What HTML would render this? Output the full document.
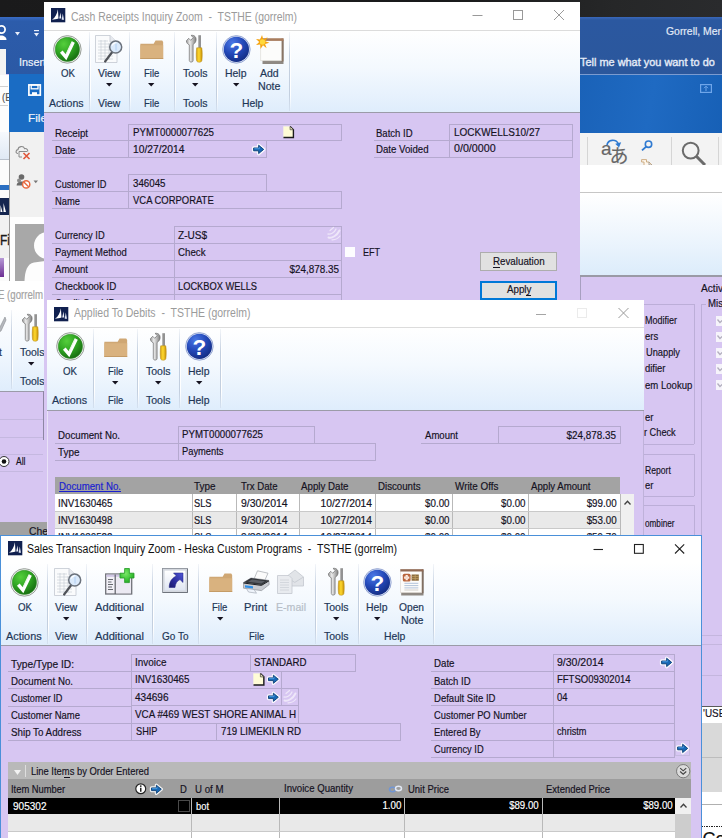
<!DOCTYPE html>
<html lang="en"><head><meta charset="utf-8"><title>Dynamics GP windows</title>
<style>
html,body{margin:0;padding:0;background:#fff;}
#root{position:relative;width:722px;height:838px;overflow:hidden;background:#d7c6f2;font-family:"Liberation Sans",sans-serif;}
.b{position:absolute;box-sizing:border-box;}
.t{position:absolute;white-space:pre;line-height:1;color:#15121f;-webkit-text-stroke:0.18px;transform-origin:0 0;font-family:"Liberation Sans",sans-serif;}
.w{position:absolute;overflow:hidden;}
svg{position:absolute;overflow:visible;}
</style></head>
<body><div id="root">
<div class="b" style="left:0px;top:0px;width:722px;height:17.4px;background:linear-gradient(90deg,#1a1a1b,#1d1d1e 40%,#18191a 60%,#262728 85%,#2a2b2d);"></div>
<div class="b" style="left:0px;top:17px;width:44px;height:57px;background:linear-gradient(#3a6cc6 0,#2c5cab 4px,#2b59a5 100%);"></div>
<div class="b" style="left:0px;top:49px;width:6px;height:26px;background:#f3f3f3;"></div>
<svg style="left:0px;top:25px" width="8" height="16" viewBox="0 0 8 16"><circle cx="1.5" cy="4.5" r="3.6" fill="none" stroke="#fff" stroke-width="1.8"/><path d="M-4 15 C-4 9 6.500 9 6.500 15 Z" fill="#fff"/></svg>
<svg style="left:14.5px;top:31.5px" width="5" height="3.4" viewBox="0 0 5 3.4"><path d="M0 0H5L2.500 3.4Z" fill="#e8eefa"/></svg>
<svg style="left:33.5px;top:29.5px" width="5" height="6.5" viewBox="0 0 5 6.5"><path d="M0 0.6H5" stroke="#e8eefa" stroke-width="1.2"/><path d="M0 3H5L2.500 6.400Z" fill="#e8eefa"/></svg>
<span class="t" style="top:56.89px;font-size:11px;left:18.60px;transform:scaleX(0.9814);color:#f0f4fb;">Insert</span>
<div class="b" style="left:0px;top:75px;width:8.5px;height:57px;background:#fdfdfd;"></div>
<div class="b" style="left:0px;top:86px;width:8px;height:1px;background:#d0d0d0;"></div>
<div class="b" style="left:0px;top:105px;width:8px;height:1px;background:#d0d0d0;"></div>
<span class="t" style="top:92.19px;font-size:11px;left:2.30px;transform:scaleX(0.8600);color:#555;">(E</span>
<div class="b" style="left:8.5px;top:74px;width:36px;height:57.5px;background:#1a6cc4;"></div>
<svg style="left:28.4px;top:84.2px" width="13.2" height="12" viewBox="0 0 13.2 12"><rect x="0.9" y="0.9" width="11.4" height="10.2" fill="none" stroke="#fff" stroke-width="1.7"/><rect x="3.200" y="1" width="6.800" height="3.800" fill="none" stroke="#fff" stroke-width="1.3"/><rect x="4" y="8.200" width="5" height="3" fill="#fff"/></svg>
<span class="t" style="top:113.29px;font-size:11px;left:28.40px;transform:scaleX(1.0719);color:#f0f4fb;">File</span>
<div class="b" style="left:0px;top:131.5px;width:9px;height:150px;background:#fbfbfb;"></div>
<div class="b" style="left:0px;top:131.5px;width:8.5px;height:28px;background:linear-gradient(#f6f9fd,#dfe8f4);"></div>
<div class="b" style="left:0px;top:159px;width:8.5px;height:1px;background:#b9c1cc;"></div>
<div class="b" style="left:0px;top:185px;width:8.5px;height:4.5px;background:#2b6fc2;"></div>
<div class="b" style="left:0px;top:198px;width:8.5px;height:17px;background:#14254f;"></div>
<svg style="left:0px;top:201px" width="8" height="12" viewBox="0 0 8 12"><path d="M0.5 11V4L2.500 11Z M3.500 11V2L6 11Z" fill="#fff"/></svg>
<div class="b" style="left:0px;top:215px;width:8.5px;height:43px;background:#f1f1f1;"></div>
<span class="t" style="top:232.30px;font-size:15px;left:0.00px;transform:scaleX(0.8000);color:#1a1a1a;-webkit-text-stroke:0.4px;">Fi</span>
<div class="b" style="left:0px;top:258px;width:4px;height:19px;background:linear-gradient(#b79ad6,#6d2f93);"></div>
<div class="b" style="left:8.5px;top:131.5px;width:36px;height:85px;background:#f1f1f1;"></div>
<div class="b" style="left:8.5px;top:216.5px;width:36px;height:65px;background:#fefefe;"></div>
<div class="b" style="left:8.5px;top:131.5px;width:1px;height:149.5px;background:#9c9c9c;"></div>
<svg style="left:14.5px;top:145px" width="16" height="15" viewBox="0 0 16 15"><path d="M3 8.500 C0.4 8.500 0.4 4.800 3 4.600 C3.200 1.200 8.400 0.4 9.600 3.600 C11.800 3.200 13.200 5 12.600 6.600" fill="none" stroke="#8a8a8a" stroke-width="1.1"/><path d="M4 6.500H12M4 6.500V12H7" fill="none" stroke="#8a8a8a" stroke-width="1"/><path d="M8.500 8L14.500 14M14.500 8L8.500 14" stroke="#e0563a" stroke-width="1.6"/></svg>
<svg style="left:15.5px;top:173.5px" width="23" height="15" viewBox="0 0 23 15"><circle cx="5.500" cy="3" r="2.800" fill="#6a6a6a"/><path d="M0.6 11.500 C0.6 6 10.400 6 10.400 11.500 Z" fill="#6a6a6a"/><circle cx="3" cy="6.500" r="2" fill="#8b8b8b"/><circle cx="10.200" cy="10.400" r="3.600" fill="#fff" stroke="#e8693f" stroke-width="1.5"/><path d="M7.800 8L12.600 12.800" stroke="#e8693f" stroke-width="1.4"/><path d="M17.500 6.500H22L19.750 9.200Z" fill="#777"/></svg>
<div class="b" style="left:15px;top:224px;width:30px;height:57px;background:#a8a8a8;"></div>
<div class="b" style="left:34px;top:232px;width:27px;height:27px;background:#fdfdfd;border-radius:50%;"></div>
<svg style="left:15px;top:224px" width="30" height="57" viewBox="0 0 30 57"><path d="M9.500 57 C10 47 12 40 19 38.500 L30 37 V57 Z" fill="#fdfdfd"/></svg>
<div class="b" style="left:0px;top:281px;width:44px;height:27.5px;background:#ffffff;"></div>
<span class="t" style="top:288.54px;font-size:12px;left:-2.00px;transform:scaleX(0.8034);color:#a3a3a3;">E (gorrelm</span>
<div class="b" style="left:0px;top:308px;width:44px;height:83px;background:linear-gradient(#ffffff 0%,#f4f9fe 45%,#dfedfc 100%);"></div>
<div class="b" style="left:10.5px;top:310px;width:1px;height:79px;background:linear-gradient(rgba(197,208,224,.2),#c3cfdf 30%,#c3cfdf 80%,rgba(197,208,224,.4));"></div>
<div class="b" style="left:11.5px;top:310px;width:1px;height:79px;background:linear-gradient(rgba(255,255,255,0),#ffffff 30%,#ffffff 80%,rgba(255,255,255,0));"></div>
<svg style="left:-3px;top:317px" width="9" height="17" viewBox="0 0 9 17"><path d="M8 0L2 12L0 16L4 14L9 3Z" fill="#b5b8bd" stroke="#8a8d92" stroke-width="0.6"/></svg>
<span class="t" style="top:346.91px;font-size:10.5px;left:-1.00px;transform:scaleX(1.0000);color:#1e3656;">t</span>
<svg style="left:22.2px;top:313.5px" width="16.2" height="27.5" viewBox="0 0 16.2 27.5"><defs><linearGradient id="g1" x1="0" y1="0" x2="1" y2="0"><stop offset="0" stop-color="#9a9a9a"/><stop offset="0.35" stop-color="#ececec"/><stop offset="1" stop-color="#7e7e7e"/></linearGradient><linearGradient id="g2" x1="0" y1="0" x2="1" y2="0"><stop offset="0" stop-color="#d39f0e"/><stop offset="0.45" stop-color="#ffd92e"/><stop offset="1" stop-color="#c48e0a"/></linearGradient><linearGradient id="g3" x1="0" y1="0" x2="1" y2="0"><stop offset="0" stop-color="#b9b9b9"/><stop offset="1" stop-color="#6f6f6f"/></linearGradient></defs><path d="M0.4 5.800 L2.700 3.300 L4.700 5.300 L7.300 2.500 L5 0.4 C8.500 -0.4 10.900 2.600 9.900 6 C9.400 7.800 8 8.800 7.100 9.500 L7.100 25.500 C7.100 27.600 3.300 27.600 3.300 25.500 L3.300 9.800 C1.500 9.200 0.4 7.600 0.4 5.800 Z" fill="url(#g1)" stroke="#6d6d6d" stroke-width="0.7" stroke-linejoin="round"/><rect x="12.100" y="0.2" width="2.700" height="13" fill="url(#g3)"/><path d="M10.700 12.800 H15.800 C16.400 17 16.400 22 15.900 25.600 C15.700 27.800 10.800 27.800 10.600 25.600 C10.100 22 10.100 17 10.700 12.800 Z" fill="url(#g2)" stroke="#b5860b" stroke-width="0.5"/></svg>
<span class="t" style="top:346.91px;font-size:10.5px;left:19.50px;transform:scaleX(0.9954);color:#1e3656;">Tools</span>
<svg style="left:27.8px;top:362.4px" width="6.4" height="3.4" viewBox="0 0 6.4 3.4"><path d="M0 0 H6.4 L3.2 3.4 Z" fill="#15121f"/></svg>
<span class="t" style="top:376.31px;font-size:10.5px;left:19.50px;transform:scaleX(0.9954);color:#1e3656;">Tools</span>
<div class="b" style="left:0px;top:391px;width:44px;height:1px;background:#9b9ba8;"></div>
<div class="b" style="left:0px;top:392px;width:44px;height:146px;background:#d7c6f2;"></div>
<div class="b" style="left:0px;top:419px;width:43px;height:1px;background:#c5b8e0;"></div>
<div class="b" style="left:0px;top:437px;width:43px;height:1px;background:#c5b8e0;"></div>
<div class="b" style="left:0px;top:453.5px;width:43px;height:1px;background:#c5b8e0;"></div>
<div class="b" style="left:0px;top:471px;width:43px;height:1px;background:#c5b8e0;"></div>
<svg style="left:-2px;top:455.5px" width="12" height="12" viewBox="0 0 12 12"><circle cx="6" cy="5.500" r="5" fill="#fff" stroke="#333" stroke-width="1"/><circle cx="6" cy="5.500" r="2.300" fill="#111"/></svg>
<span class="t" style="top:456.19px;font-size:11px;left:15.70px;transform:scaleX(0.7771);">All</span>
<div class="b" style="left:0px;top:522px;width:47px;height:14px;background:#a2a2a2;"></div>
<span class="t" style="top:526.19px;font-size:11px;left:28.70px;transform:scaleX(0.9416);">Che</span>
<div class="b" style="left:44px;top:300px;width:3px;height:140px;background:#d7c6f2;"></div>
<div class="b" style="left:43px;top:391px;width:1px;height:49px;background:#8d86a3;"></div>
<div class="b" style="left:580px;top:17px;width:142px;height:57px;background:linear-gradient(#3a68bb 0,#2b58a0 3px,#2b579c 100%);"></div>
<div class="b" style="left:580px;top:74px;width:142px;height:1px;background:#7b9bd0;"></div>
<div class="b" style="left:580px;top:75px;width:142px;height:58px;background:linear-gradient(100deg,#1a62b8 0%,#1f6ac2 50%,#1760b6 100%);"></div>
<span class="t" style="top:26.27px;font-size:11.5px;left:665.80px;transform:scaleX(0.9061);color:#e4ebf7;">Gorrell, Mer</span>
<span class="t" style="top:56.77px;font-size:11.5px;left:580.40px;transform:scaleX(0.9499);color:#e4ebf7;-webkit-text-stroke:0.4px;">Tell me what you want to do</span>
<svg style="left:699.5px;top:83.5px" width="12" height="9" viewBox="0 0 12 9"><rect x="0.6" y="0.6" width="10.8" height="7.800" fill="none" stroke="#6fa6ea" stroke-width="1.2"/><path d="M6 7V2.500M4 4.200L6 2.200L8 4.200" stroke="#6fa6ea" stroke-width="1" fill="none"/></svg>
<div class="b" style="left:580px;top:133px;width:142px;height:32px;background:#f3f3f3;"></div>
<div class="b" style="left:587px;top:137px;width:1px;height:28px;background:#d5d5d5;"></div>
<div class="b" style="left:671px;top:137px;width:1px;height:28px;background:#d5d5d5;"></div>
<div class="b" style="left:717.5px;top:137px;width:1px;height:28px;background:#d5d5d5;"></div>
<div class="b" style="left:596px;top:136px;width:40px;height:29px;overflow:hidden;"><span class="t" style="left:5px;top:3px;font-size:19px;color:#666;transform:none;">a</span><span class="t" style="left:13.5px;top:11px;font-size:19px;color:#666;transform:none;font-family:'Liberation Sans','Noto Sans CJK JP',sans-serif;">あ</span><svg style="left:10px;top:2px" width="16" height="11" viewBox="0 0 16 11"><path d="M1 7 C2 1.200 10 0.6 12.500 6" fill="none" stroke="#2f7ad1" stroke-width="1.7"/><path d="M9.200 5.800L13 9.500L15.200 4.200Z" fill="#2f7ad1"/></svg></div>
<svg style="left:641px;top:140px" width="12" height="11" viewBox="0 0 12 11"><circle cx="7.500" cy="4.200" r="3.200" fill="none" stroke="#2f7ad1" stroke-width="1.6"/><path d="M5.200 6.600L1 10.400" stroke="#2f7ad1" stroke-width="1.900"/></svg>
<div class="b" style="left:641px;top:159px;width:13px;height:6px;overflow:hidden;"><svg style="left:0;top:0" width="13" height="12" viewBox="0 0 13 12"><path d="M0.6 0.6H5.500V3H8L11 6V12H3V3H0.6Z" fill="#fdf6ec" stroke="#c9a77a" stroke-width="0.9"/><path d="M8 3V6H11" fill="none" stroke="#8a8a8a" stroke-width="0.8"/></svg></div>
<div class="b" style="left:678px;top:138px;width:32px;height:27px;overflow:hidden;"><svg style="left:0;top:0" width="32" height="30" viewBox="0 0 32 30"><circle cx="12.700" cy="12.600" r="7.900" fill="none" stroke="#6b6b6b" stroke-width="2"/><path d="M18.600 18.500L27 27" stroke="#6b6b6b" stroke-width="3"/></svg></div>
<div class="b" style="left:580px;top:165px;width:142px;height:27.5px;background:#ffffff;"></div>
<div class="b" style="left:580px;top:192px;width:142px;height:1px;background:#c6c6c6;"></div>
<div class="b" style="left:580px;top:193px;width:142px;height:82px;background:linear-gradient(#ffffff,#eff6fd 50%,#dcecfb);"></div>
<div class="b" style="left:580px;top:275px;width:142px;height:2px;background:#9a9aa6;"></div>
<div class="b" style="left:580px;top:277px;width:142px;height:561px;background:#d7c6f2;"></div>
<div class="b" style="left:580px;top:277px;width:1px;height:23px;background:#a79fc0;"></div>
<div class="b" style="left:644px;top:304px;width:50px;height:1px;background:#bcaed8;"></div>
<div class="b" style="left:694px;top:304px;width:1px;height:140px;background:#bcaed8;"></div>
<div class="b" style="left:644px;top:444px;width:50px;height:1px;background:#bcaed8;"></div>
<div class="b" style="left:644px;top:454px;width:50px;height:1px;background:#bcaed8;"></div>
<div class="b" style="left:694px;top:454px;width:1px;height:42px;background:#bcaed8;"></div>
<div class="b" style="left:644px;top:496px;width:50px;height:1px;background:#bcaed8;"></div>
<div class="b" style="left:644px;top:504.5px;width:50px;height:1px;background:#bcaed8;"></div>
<div class="b" style="left:694px;top:504.5px;width:1px;height:31.5px;background:#bcaed8;"></div>
<div class="b" style="left:701px;top:304px;width:1px;height:336px;background:#bcaed8;"></div>
<div class="b" style="left:701px;top:304px;width:5px;height:1px;background:#bcaed8;"></div>
<span class="t" style="top:283.39px;font-size:11px;left:700.50px;transform:scaleX(0.9229);">Activ</span>
<span class="t" style="top:297.69px;font-size:11px;left:708.00px;transform:scaleX(0.8768);">Mis</span>
<span class="t" style="top:314.99px;font-size:11px;left:644.80px;transform:scaleX(0.8179);">Modifier</span>
<span class="t" style="top:331.19px;font-size:11px;left:644.80px;transform:scaleX(0.8600);">ers</span>
<span class="t" style="top:347.09px;font-size:11px;left:645.60px;transform:scaleX(0.8424);">Unapply</span>
<span class="t" style="top:363.29px;font-size:11px;left:644.50px;transform:scaleX(0.8600);">difier</span>
<span class="t" style="top:379.69px;font-size:11px;left:644.50px;transform:scaleX(0.8691);">em Lookup</span>
<span class="t" style="top:412.09px;font-size:11px;left:644.50px;transform:scaleX(0.8600);">er</span>
<span class="t" style="top:427.49px;font-size:11px;left:644.30px;transform:scaleX(0.8364);">r Check</span>
<span class="t" style="top:465.19px;font-size:11px;left:644.50px;transform:scaleX(0.7814);">Report</span>
<span class="t" style="top:480.39px;font-size:11px;left:644.50px;transform:scaleX(0.8600);">er</span>
<span class="t" style="top:518.19px;font-size:11px;left:644.50px;transform:scaleX(0.7423);">ombiner</span>
<div class="b" style="left:715.5px;top:316px;width:10px;height:10px;background:#f6f4fb;"></div>
<svg style="left:716.5px;top:318px" width="8" height="6" viewBox="0 0 8 6"><path d="M0.5 1.500L3 4.500L8 0" stroke="#b3afbf" stroke-width="1.3" fill="none"/></svg>
<div class="b" style="left:715.5px;top:332px;width:10px;height:10px;background:#f6f4fb;"></div>
<svg style="left:716.5px;top:334px" width="8" height="6" viewBox="0 0 8 6"><path d="M0.5 1.500L3 4.500L8 0" stroke="#b3afbf" stroke-width="1.3" fill="none"/></svg>
<div class="b" style="left:715.5px;top:348px;width:10px;height:10px;background:#f6f4fb;"></div>
<svg style="left:716.5px;top:350px" width="8" height="6" viewBox="0 0 8 6"><path d="M0.5 1.500L3 4.500L8 0" stroke="#b3afbf" stroke-width="1.3" fill="none"/></svg>
<div class="b" style="left:715.5px;top:364px;width:10px;height:10px;background:#f6f4fb;"></div>
<svg style="left:716.5px;top:366px" width="8" height="6" viewBox="0 0 8 6"><path d="M0.5 1.500L3 4.500L8 0" stroke="#b3afbf" stroke-width="1.3" fill="none"/></svg>
<div class="b" style="left:715.5px;top:380px;width:10px;height:10px;background:#f6f4fb;"></div>
<svg style="left:716.5px;top:382px" width="8" height="6" viewBox="0 0 8 6"><path d="M0.5 1.500L3 4.500L8 0" stroke="#b3afbf" stroke-width="1.3" fill="none"/></svg>
<div class="b" style="left:701px;top:635px;width:21px;height:1px;background:#c4b6de;"></div>
<div class="b" style="left:701px;top:643.5px;width:21px;height:1px;background:#c4b6de;"></div>
<div class="b" style="left:701px;top:674.5px;width:21px;height:1px;background:#c4b6de;"></div>
<div class="b" style="left:701px;top:705.5px;width:21px;height:17.5px;background:#ffffff;border-top:1px solid #5a5a5a;"></div>
<span class="t" style="top:708.49px;font-size:11px;left:703.20px;transform:scaleX(0.9000);">&#x27;USE</span>
<div class="b" style="left:701px;top:723px;width:21px;height:69px;background:#d9d9d9;"></div>
<div class="b" style="left:701px;top:757px;width:21px;height:1px;background:#bdbdbd;"></div>
<div class="b" style="left:701px;top:792px;width:21px;height:46px;background:#ffffff;"></div>
<div class="b" style="left:701px;top:803.5px;width:21px;height:1px;background:#b0b0b0;"></div>
<div class="b" style="left:701px;top:825.5px;width:21px;height:1.5px;background:repeating-linear-gradient(90deg,#222 0 1.500px,#fff 1.500px 2.500px);"></div>
<span class="t" style="top:829.76px;font-size:18px;left:702.40px;transform:scaleX(1.0000);color:#111;">Co</span>
<div class="b" style="left:44px;top:2px;width:536px;height:300px;background:#ffffff;"></div>
<div class="b" style="left:44px;top:30px;width:536px;height:82px;background:linear-gradient(#ffffff 0%,#f4f9fe 45%,#dfedfc 100%);"></div>
<div class="b" style="left:44px;top:30px;width:536px;height:1px;background:#dcdcdc;"></div>
<div class="b" style="left:44px;top:112px;width:536px;height:1px;background:#9b9ba8;"></div>
<div class="b" style="left:44px;top:113px;width:536px;height:190px;background:#d7c6f2;"></div>
<span class="t" style="top:10.84px;font-size:12px;left:71.00px;transform:scaleX(0.8697);color:#9b9b9b;-webkit-text-stroke:0;">Cash Receipts Inquiry Zoom  -  TSTHE (gorrelm)</span>
<div class="b" style="left:52px;top:140px;width:76px;height:1px;background:#b5a9cf;"></div>
<div class="b" style="left:52px;top:157px;width:76px;height:1px;background:#b5a9cf;"></div>
<div class="b" style="left:128px;top:124px;width:214px;height:17px;border:1px solid #b5a9cf;"></div>
<div class="b" style="left:128px;top:140px;width:139px;height:18px;border:1px solid #b5a9cf;"></div>
<span class="t" style="top:127.69px;font-size:11px;left:55.00px;transform:scaleX(0.8848);">Receipt</span>
<span class="t" style="top:126.69px;font-size:11px;left:133.00px;transform:scaleX(0.8830);">PYMT0000077625</span>
<span class="t" style="top:144.69px;font-size:11px;left:55.00px;transform:scaleX(0.8823);">Date</span>
<span class="t" style="top:143.69px;font-size:11px;left:133.00px;transform:scaleX(0.9354);">10/27/2014</span>
<div class="b" style="left:52px;top:191px;width:76px;height:1px;background:#b5a9cf;"></div>
<div class="b" style="left:52px;top:208px;width:76px;height:1px;background:#b5a9cf;"></div>
<div class="b" style="left:128px;top:174px;width:139px;height:18px;border:1px solid #b5a9cf;"></div>
<div class="b" style="left:128px;top:191px;width:214px;height:18px;border:1px solid #b5a9cf;"></div>
<span class="t" style="top:178.99px;font-size:11px;left:55.00px;transform:scaleX(0.8342);">Customer ID</span>
<span class="t" style="top:178.19px;font-size:11px;left:133.00px;transform:scaleX(0.8854);">346045</span>
<span class="t" style="top:195.99px;font-size:11px;left:55.00px;transform:scaleX(0.8520);">Name</span>
<span class="t" style="top:195.19px;font-size:11px;left:133.00px;transform:scaleX(0.8592);">VCA CORPORATE</span>
<div class="b" style="left:52px;top:243px;width:122px;height:1px;background:#b5a9cf;"></div>
<div class="b" style="left:174px;top:226px;width:168px;height:18px;border:1px solid #b5a9cf;"></div>
<span class="t" style="top:230.39px;font-size:11px;left:55.00px;transform:scaleX(0.8453);">Currency ID</span>
<span class="t" style="top:229.59px;font-size:11px;left:178.00px;transform:scaleX(0.9125);">Z-US$</span>
<div class="b" style="left:52px;top:260px;width:122px;height:1px;background:#b5a9cf;"></div>
<div class="b" style="left:174px;top:243px;width:168px;height:18px;border:1px solid #b5a9cf;"></div>
<span class="t" style="top:247.39px;font-size:11px;left:55.00px;transform:scaleX(0.8622);">Payment Method</span>
<span class="t" style="top:246.59px;font-size:11px;left:178.00px;transform:scaleX(0.8820);">Check</span>
<div class="b" style="left:52px;top:277px;width:122px;height:1px;background:#b5a9cf;"></div>
<div class="b" style="left:174px;top:260px;width:168px;height:18px;border:1px solid #b5a9cf;"></div>
<span class="t" style="top:264.39px;font-size:11px;left:55.00px;transform:scaleX(0.8705);">Amount</span>
<div class="b" style="left:52px;top:294px;width:122px;height:1px;background:#b5a9cf;"></div>
<div class="b" style="left:174px;top:277px;width:168px;height:18px;border:1px solid #b5a9cf;"></div>
<span class="t" style="top:281.39px;font-size:11px;left:55.00px;transform:scaleX(0.8887);">Checkbook ID</span>
<span class="t" style="top:280.59px;font-size:11px;left:178.00px;transform:scaleX(0.8446);">LOCKBOX WELLS</span>
<div class="b" style="left:52px;top:311px;width:122px;height:1px;background:#b5a9cf;"></div>
<div class="b" style="left:174px;top:294px;width:168px;height:18px;border:1px solid #b5a9cf;"></div>
<span class="t" style="top:298.39px;font-size:11px;left:55.00px;transform:scaleX(0.8600);">Credit Card ID</span>
<span class="t" style="top:263.69px;font-size:11px;right:382.50px;transform-origin:100% 0;transform:scaleX(0.8991);">$24,878.35</span>
<div class="b" style="left:374px;top:140px;width:75px;height:1px;background:#b5a9cf;"></div>
<div class="b" style="left:374px;top:157px;width:75px;height:1px;background:#b5a9cf;"></div>
<div class="b" style="left:449px;top:124px;width:124px;height:17px;border:1px solid #b5a9cf;"></div>
<div class="b" style="left:449px;top:140px;width:124px;height:18px;border:1px solid #b5a9cf;"></div>
<span class="t" style="top:127.69px;font-size:11px;left:376.40px;transform:scaleX(0.8676);">Batch ID</span>
<span class="t" style="top:126.69px;font-size:11px;left:453.50px;transform:scaleX(0.9074);">LOCKWELLS10/27</span>
<span class="t" style="top:144.29px;font-size:11px;left:376.40px;transform:scaleX(0.8776);">Date Voided</span>
<span class="t" style="top:143.29px;font-size:11px;left:453.50px;transform:scaleX(0.9715);">0/0/0000</span>
<div class="b" style="left:345px;top:247px;width:10px;height:10px;background:#fdfdff;"></div>
<span class="t" style="top:247.19px;font-size:11px;left:363.00px;transform:scaleX(0.8183);">EFT</span>
<div class="b" style="left:480px;top:252px;width:77px;height:19px;background:#e1e1e1;border:1px solid #adadad;"></div>
<span class="t" style="top:256.09px;font-size:11px;left:492.70px;transform:scaleX(0.8882);">Revaluation</span>
<div class="b" style="left:480px;top:280.5px;width:77px;height:19.5px;background:#e1e1e1;border:2px solid #0078d7;"></div>
<span class="t" style="top:283.89px;font-size:11px;left:507.30px;transform:scaleX(0.8867);">Apply</span>
<div class="b" style="left:493px;top:267px;width:6.5px;height:1px;background:#15121f;"></div>
<div class="b" style="left:526px;top:295px;width:5px;height:1px;background:#15121f;"></div>
<svg style="left:51px;top:8px" width="14.3" height="14.3" viewBox="0 0 14.3 14.3"><rect width="14.3" height="14.3" fill="#10204f"/><path d="M1 11.7 C4.200 9.800 6 6 6.900 1.200 L7.500 10.600 C5.500 11.400 3 11.700 1 11.700 Z" fill="#fff"/><path d="M8.200 10.600 L9.500 4.400 L10.300 10.600 Z" fill="#eef2fb"/><path d="M10.700 11.700 L11.800 5.600 L13 11.700 Z" fill="#e3e9f7"/></svg>
<div class="b" style="left:89px;top:32px;width:1px;height:79px;background:linear-gradient(rgba(197,208,224,.2),#c3cfdf 30%,#c3cfdf 80%,rgba(197,208,224,.4));"></div>
<div class="b" style="left:90px;top:32px;width:1px;height:79px;background:linear-gradient(rgba(255,255,255,0),#ffffff 30%,#ffffff 80%,rgba(255,255,255,0));"></div>
<div class="b" style="left:129px;top:32px;width:1px;height:79px;background:linear-gradient(rgba(197,208,224,.2),#c3cfdf 30%,#c3cfdf 80%,rgba(197,208,224,.4));"></div>
<div class="b" style="left:130px;top:32px;width:1px;height:79px;background:linear-gradient(rgba(255,255,255,0),#ffffff 30%,#ffffff 80%,rgba(255,255,255,0));"></div>
<div class="b" style="left:174px;top:32px;width:1px;height:79px;background:linear-gradient(rgba(197,208,224,.2),#c3cfdf 30%,#c3cfdf 80%,rgba(197,208,224,.4));"></div>
<div class="b" style="left:175px;top:32px;width:1px;height:79px;background:linear-gradient(rgba(255,255,255,0),#ffffff 30%,#ffffff 80%,rgba(255,255,255,0));"></div>
<div class="b" style="left:216px;top:32px;width:1px;height:79px;background:linear-gradient(rgba(197,208,224,.2),#c3cfdf 30%,#c3cfdf 80%,rgba(197,208,224,.4));"></div>
<div class="b" style="left:217px;top:32px;width:1px;height:79px;background:linear-gradient(rgba(255,255,255,0),#ffffff 30%,#ffffff 80%,rgba(255,255,255,0));"></div>
<div class="b" style="left:289px;top:32px;width:1px;height:79px;background:linear-gradient(rgba(197,208,224,.2),#c3cfdf 30%,#c3cfdf 80%,rgba(197,208,224,.4));"></div>
<div class="b" style="left:290px;top:32px;width:1px;height:79px;background:linear-gradient(rgba(255,255,255,0),#ffffff 30%,#ffffff 80%,rgba(255,255,255,0));"></div>
<svg style="left:53.2px;top:34.8px" width="28.8" height="28.8" viewBox="0 0 32 32"><defs><radialGradient id="g4" cx="35%" cy="28%" r="80%"><stop offset="0" stop-color="#55cf3c"/><stop offset="0.5" stop-color="#2fa522"/><stop offset="1" stop-color="#14660f"/></radialGradient></defs><circle cx="16" cy="16" r="15.3" fill="#f1f4f1" stroke="#8d948d" stroke-width="1"/><circle cx="16" cy="16" r="13.5" fill="url(#g4)" stroke="#2c8a25" stroke-width="0.6"/><path d="M9.200 18.400 L14.400 24.600 L22.500 7.800" fill="none" stroke="#fff" stroke-width="3.800" stroke-linejoin="miter"/><path d="M14.600 21.500 L21.400 7.400" stroke="#d9f2d4" stroke-width="1" opacity="0.7"/></svg>
<span class="t" style="top:68.31px;font-size:10.5px;left:61.00px;transform:scaleX(0.9228);color:#1e3656;">OK</span>
<span class="t" style="top:97.61px;font-size:10.5px;left:49.40px;transform:scaleX(1.0049);color:#1e3656;">Actions</span>
<svg style="left:95.3px;top:35.2px" width="25.5" height="28.5" viewBox="0 0 25.5 28.5"><path d="M0.5 0.5 H15 L22 7 V27.500 H0.5 Z" fill="#fafbfc" stroke="#c3c8d0" stroke-width="0.8"/><path d="M15 0.5 V7 H22" fill="#e6e9ee" stroke="#c3c8d0" stroke-width="0.8"/><g stroke="#c5cad2" stroke-width="0.6"><path d="M3 6H13M3 9H18M3 12H18M3 15H18M3 18H18M3 21H18M3 24H18"/><path d="M6 5V25M10 5V25M14 8V25"/></g><path d="M17 17.400 L10.200 26.400" stroke="#4f5258" stroke-width="2.400" stroke-linecap="round"/><circle cx="20.700" cy="12.100" r="6" fill="#d8e8fb" fill-opacity="0.92" stroke="#6b727c" stroke-width="1.500"/><path d="M17.200 10.400 A4 4 0 0 1 21.400 8" stroke="#fff" stroke-width="1.200" fill="none"/><path d="M21 8.500 V15.500" stroke="#9fc3ee" stroke-width="0.7"/></svg>
<span class="t" style="top:68.31px;font-size:10.5px;left:98.15px;transform:scaleX(0.9881);color:#1e3656;">View</span>
<svg style="left:106px;top:83.4px" width="6.4" height="3.4" viewBox="0 0 6.4 3.4"><path d="M0 0 H6.4 L3.2 3.4 Z" fill="#15121f"/></svg>
<span class="t" style="top:97.61px;font-size:10.5px;left:98.15px;transform:scaleX(0.9881);color:#1e3656;">View</span>
<svg style="left:140.3px;top:40px" width="23.5" height="19" viewBox="0 0 24 20"><path d="M0 4 H14 L16 0.5 H23 L24 2 V20 H0 Z" fill="#cfa774"/><path d="M0 5.5 H24 V20 H0 Z" fill="#d9b27f"/><path d="M0 19 H24 V20 H0 Z" fill="#c39a66"/></svg>
<span class="t" style="top:68.31px;font-size:10.5px;left:144.35px;transform:scaleX(0.9043);color:#1e3656;">File</span>
<svg style="left:148.3px;top:83.4px" width="6.4" height="3.4" viewBox="0 0 6.4 3.4"><path d="M0 0 H6.4 L3.2 3.4 Z" fill="#15121f"/></svg>
<span class="t" style="top:97.61px;font-size:10.5px;left:144.35px;transform:scaleX(0.9043);color:#1e3656;">File</span>
<svg style="left:186px;top:34.9px" width="16.2" height="27.5" viewBox="0 0 16.2 27.5"><defs><linearGradient id="g5" x1="0" y1="0" x2="1" y2="0"><stop offset="0" stop-color="#9a9a9a"/><stop offset="0.35" stop-color="#ececec"/><stop offset="1" stop-color="#7e7e7e"/></linearGradient><linearGradient id="g6" x1="0" y1="0" x2="1" y2="0"><stop offset="0" stop-color="#d39f0e"/><stop offset="0.45" stop-color="#ffd92e"/><stop offset="1" stop-color="#c48e0a"/></linearGradient><linearGradient id="g7" x1="0" y1="0" x2="1" y2="0"><stop offset="0" stop-color="#b9b9b9"/><stop offset="1" stop-color="#6f6f6f"/></linearGradient></defs><path d="M0.4 5.800 L2.700 3.300 L4.700 5.300 L7.300 2.500 L5 0.4 C8.500 -0.4 10.900 2.600 9.900 6 C9.400 7.800 8 8.800 7.100 9.500 L7.100 25.500 C7.100 27.600 3.300 27.600 3.300 25.500 L3.300 9.800 C1.500 9.200 0.4 7.600 0.4 5.800 Z" fill="url(#g5)" stroke="#6d6d6d" stroke-width="0.7" stroke-linejoin="round"/><rect x="12.100" y="0.2" width="2.700" height="13" fill="url(#g7)"/><path d="M10.700 12.800 H15.800 C16.400 17 16.400 22 15.900 25.600 C15.700 27.800 10.800 27.800 10.600 25.600 C10.100 22 10.100 17 10.700 12.800 Z" fill="url(#g6)" stroke="#b5860b" stroke-width="0.5"/></svg>
<span class="t" style="top:68.31px;font-size:10.5px;left:182.95px;transform:scaleX(0.9995);color:#1e3656;">Tools</span>
<svg style="left:191.5px;top:83.4px" width="6.4" height="3.4" viewBox="0 0 6.4 3.4"><path d="M0 0 H6.4 L3.2 3.4 Z" fill="#15121f"/></svg>
<span class="t" style="top:97.61px;font-size:10.5px;left:182.95px;transform:scaleX(0.9995);color:#1e3656;">Tools</span>
<svg style="left:222px;top:34.8px" width="28.8" height="28.8" viewBox="0 0 32 32"><defs><radialGradient id="g8" cx="35%" cy="25%" r="85%"><stop offset="0" stop-color="#4a78e6"/><stop offset="0.5" stop-color="#2348b8"/><stop offset="1" stop-color="#11287a"/></radialGradient></defs><circle cx="16" cy="16" r="15.3" fill="#dfe6f6" stroke="#7f93c8" stroke-width="0.9"/><circle cx="16" cy="16" r="14" fill="url(#g8)"/><text x="16" y="25.200" text-anchor="middle" font-family="Liberation Sans, sans-serif" font-weight="bold" font-size="25" fill="#fff">?</text></svg>
<span class="t" style="top:68.31px;font-size:10.5px;left:225.45px;transform:scaleX(0.9956);color:#1e3656;">Help</span>
<svg style="left:232.8px;top:83.4px" width="6.4" height="3.4" viewBox="0 0 6.4 3.4"><path d="M0 0 H6.4 L3.2 3.4 Z" fill="#15121f"/></svg>
<svg style="left:260px;top:37.5px" width="24" height="26" viewBox="0 0 24 26"><rect x="2.500" y="2" width="21" height="24" fill="#8f8983"/><rect x="21" y="0.5" width="2.500" height="23" fill="#8a7565"/><rect x="0.8" y="0.5" width="20.700" height="22.300" fill="#fcfcfb" stroke="#d6d0c8" stroke-width="0.5"/><rect x="0.8" y="0.3" width="22.700" height="2.600" fill="#a87c5e"/><path d="M2 -3 L3.300 1.400 L7.600 -0.8 L5.300 3.300 L9.400 4.800 L5.100 5.900 L6.600 10.200 L3 7.300 L0.5 10.900 L0.2 6.500 L-4 6.900 L-0.800 3.900 L-4 0.9 L0.2 1.500 Z" fill="#f5a30f"/><circle cx="2.500" cy="4" r="2.700" fill="#ffd83a"/></svg>
<span class="t" style="top:68.31px;font-size:10.5px;left:259.65px;transform:scaleX(1.0009);color:#1e3656;">Add</span>
<span class="t" style="top:81.41px;font-size:10.5px;left:257.75px;transform:scaleX(1.0145);color:#1e3656;">Note</span>
<span class="t" style="top:97.61px;font-size:10.5px;left:241.70px;transform:scaleX(0.9910);color:#1e3656;">Help</span>
<svg style="left:283.2px;top:126px" width="11.3" height="12.3" viewBox="0 0 10.5 11.5"><path d="M0.4 0.4 H6.600 L9.600 3.400 V10.600 H0.4 Z" fill="#fffcd6"/><path d="M0.4 10.600 V0.4 H6.600" fill="none" stroke="#f3efe0" stroke-width="0.7"/><path d="M6.600 0.4 L9.700 3.500 V10.700 H0.4" fill="none" stroke="#1d1d1d" stroke-width="1.300"/><path d="M6.600 0.6 V3.500 H9.600" fill="#e6e2b8" stroke="#3a3a3a" stroke-width="0.6"/></svg>
<svg style="left:251.5px;top:144.1px" width="13" height="10.8" viewBox="0 0 12.5 10.5"><path d="M1.500 3.900 H6.400 V1.200 L11.300 5.250 L6.400 9.300 V6.600 H1.500 Z" fill="#fff" stroke="#ffffff" stroke-width="3.400" opacity="0.85" stroke-linejoin="round"/><path d="M1.500 3.900 H6.400 V1.200 L11.300 5.250 L6.400 9.300 V6.600 H1.500 Z" fill="#1668b6" stroke="#0b4076" stroke-width="0.9" stroke-linejoin="round"/><path d="M2.200 4.600 H7 V2.900" stroke="#5fb0f2" stroke-width="0.7" fill="none"/></svg>
<svg style="left:327px;top:226px" width="14" height="15" viewBox="0 0 14 15"><g opacity="0.75" fill="none" stroke="#f6f2fc" stroke-linecap="round"><path d="M1.500 11.500 C5 12.500 10 9.500 12.500 4.500" stroke-width="2"/><path d="M1 8 C4 8.500 7.500 6.500 9 3" stroke-width="1.300"/><path d="M3 4.500 L6.500 1.500" stroke-width="1.200"/><path d="M5 13.800 C8 14 11 12.500 13 10" stroke-width="1.200"/></g></svg>
<svg style="left:474px;top:9px" width="100" height="14" viewBox="0 0 100 14"><path d="M-1.500 6.500H8.500" stroke="#999" stroke-width="1"/><rect x="39.5" y="1.5" width="9" height="9" fill="none" stroke="#999" stroke-width="1"/><path d="M80 1L90 11M90 1L80 11" stroke="#999" stroke-width="1"/></svg>
<div class="b" style="left:47px;top:300px;width:597px;height:240px;background:#ffffff;"></div>
<div class="b" style="left:47px;top:327px;width:597px;height:83px;background:linear-gradient(#ffffff 0%,#f4f9fe 45%,#dfedfc 100%);"></div>
<div class="b" style="left:47px;top:327px;width:597px;height:1px;background:#dcdcdc;"></div>
<div class="b" style="left:47px;top:410px;width:597px;height:1px;background:#9b9ba8;"></div>
<div class="b" style="left:47px;top:411px;width:597px;height:130px;background:#d7c6f2;"></div>
<svg style="left:54px;top:306.5px" width="14.3" height="14.3" viewBox="0 0 14.3 14.3"><rect width="14.3" height="14.3" fill="#10204f"/><path d="M1 11.7 C4.200 9.800 6 6 6.900 1.200 L7.500 10.600 C5.500 11.400 3 11.700 1 11.700 Z" fill="#fff"/><path d="M8.200 10.600 L9.500 4.400 L10.300 10.600 Z" fill="#eef2fb"/><path d="M10.700 11.700 L11.800 5.600 L13 11.700 Z" fill="#e3e9f7"/></svg>
<span class="t" style="top:307.44px;font-size:12px;left:74.00px;transform:scaleX(0.8754);color:#9b9b9b;-webkit-text-stroke:0;">Applied To Debits  -  TSTHE (gorrelm)</span>
<svg style="left:536px;top:307px" width="95" height="14" viewBox="0 0 95 14"><path d="M0 7.5H10" stroke="#a5a5a5" stroke-width="1"/><rect x="41.5" y="1.5" width="9" height="9" fill="none" stroke="#ebebeb" stroke-width="1"/><path d="M82.500 1L92.500 11M92.500 1L82.500 11" stroke="#9a9a9a" stroke-width="1"/></svg>
<div class="b" style="left:92.5px;top:329px;width:1px;height:79px;background:linear-gradient(rgba(197,208,224,.2),#c3cfdf 30%,#c3cfdf 80%,rgba(197,208,224,.4));"></div>
<div class="b" style="left:93.5px;top:329px;width:1px;height:79px;background:linear-gradient(rgba(255,255,255,0),#ffffff 30%,#ffffff 80%,rgba(255,255,255,0));"></div>
<div class="b" style="left:136.5px;top:329px;width:1px;height:79px;background:linear-gradient(rgba(197,208,224,.2),#c3cfdf 30%,#c3cfdf 80%,rgba(197,208,224,.4));"></div>
<div class="b" style="left:137.5px;top:329px;width:1px;height:79px;background:linear-gradient(rgba(255,255,255,0),#ffffff 30%,#ffffff 80%,rgba(255,255,255,0));"></div>
<div class="b" style="left:179px;top:329px;width:1px;height:79px;background:linear-gradient(rgba(197,208,224,.2),#c3cfdf 30%,#c3cfdf 80%,rgba(197,208,224,.4));"></div>
<div class="b" style="left:180px;top:329px;width:1px;height:79px;background:linear-gradient(rgba(255,255,255,0),#ffffff 30%,#ffffff 80%,rgba(255,255,255,0));"></div>
<div class="b" style="left:219.5px;top:329px;width:1px;height:79px;background:linear-gradient(rgba(197,208,224,.2),#c3cfdf 30%,#c3cfdf 80%,rgba(197,208,224,.4));"></div>
<div class="b" style="left:220.5px;top:329px;width:1px;height:79px;background:linear-gradient(rgba(255,255,255,0),#ffffff 30%,#ffffff 80%,rgba(255,255,255,0));"></div>
<svg style="left:55.9px;top:332.4px" width="28.8" height="28.8" viewBox="0 0 32 32"><defs><radialGradient id="g9" cx="35%" cy="28%" r="80%"><stop offset="0" stop-color="#55cf3c"/><stop offset="0.5" stop-color="#2fa522"/><stop offset="1" stop-color="#14660f"/></radialGradient></defs><circle cx="16" cy="16" r="15.3" fill="#f1f4f1" stroke="#8d948d" stroke-width="1"/><circle cx="16" cy="16" r="13.5" fill="url(#g9)" stroke="#2c8a25" stroke-width="0.6"/><path d="M9.200 18.400 L14.400 24.600 L22.500 7.800" fill="none" stroke="#fff" stroke-width="3.800" stroke-linejoin="miter"/><path d="M14.600 21.500 L21.400 7.400" stroke="#d9f2d4" stroke-width="1" opacity="0.7"/></svg>
<span class="t" style="top:365.71px;font-size:10.5px;left:63.30px;transform:scaleX(0.9228);color:#1e3656;">OK</span>
<span class="t" style="top:395.01px;font-size:10.5px;left:51.90px;transform:scaleX(1.0165);color:#1e3656;">Actions</span>
<svg style="left:103.6px;top:337.5px" width="23.5" height="19" viewBox="0 0 24 20"><path d="M0 4 H14 L16 0.5 H23 L24 2 V20 H0 Z" fill="#cfa774"/><path d="M0 5.5 H24 V20 H0 Z" fill="#d9b27f"/><path d="M0 19 H24 V20 H0 Z" fill="#c39a66"/></svg>
<span class="t" style="top:365.71px;font-size:10.5px;left:107.55px;transform:scaleX(0.9043);color:#1e3656;">File</span>
<svg style="left:112px;top:380.8px" width="6.4" height="3.4" viewBox="0 0 6.4 3.4"><path d="M0 0 H6.4 L3.2 3.4 Z" fill="#15121f"/></svg>
<span class="t" style="top:395.01px;font-size:10.5px;left:107.55px;transform:scaleX(0.9043);color:#1e3656;">File</span>
<svg style="left:150px;top:332.6px" width="16.2" height="27.5" viewBox="0 0 16.2 27.5"><defs><linearGradient id="g10" x1="0" y1="0" x2="1" y2="0"><stop offset="0" stop-color="#9a9a9a"/><stop offset="0.35" stop-color="#ececec"/><stop offset="1" stop-color="#7e7e7e"/></linearGradient><linearGradient id="g11" x1="0" y1="0" x2="1" y2="0"><stop offset="0" stop-color="#d39f0e"/><stop offset="0.45" stop-color="#ffd92e"/><stop offset="1" stop-color="#c48e0a"/></linearGradient><linearGradient id="g12" x1="0" y1="0" x2="1" y2="0"><stop offset="0" stop-color="#b9b9b9"/><stop offset="1" stop-color="#6f6f6f"/></linearGradient></defs><path d="M0.4 5.800 L2.700 3.300 L4.700 5.300 L7.300 2.500 L5 0.4 C8.500 -0.4 10.900 2.600 9.900 6 C9.400 7.800 8 8.800 7.100 9.500 L7.100 25.500 C7.100 27.600 3.300 27.600 3.300 25.500 L3.300 9.800 C1.500 9.200 0.4 7.600 0.4 5.800 Z" fill="url(#g10)" stroke="#6d6d6d" stroke-width="0.7" stroke-linejoin="round"/><rect x="12.100" y="0.2" width="2.700" height="13" fill="url(#g12)"/><path d="M10.700 12.800 H15.800 C16.400 17 16.400 22 15.900 25.600 C15.700 27.800 10.800 27.800 10.600 25.600 C10.100 22 10.100 17 10.700 12.800 Z" fill="url(#g11)" stroke="#b5860b" stroke-width="0.5"/></svg>
<span class="t" style="top:365.71px;font-size:10.5px;left:146.15px;transform:scaleX(0.9995);color:#1e3656;">Tools</span>
<svg style="left:155.2px;top:380.8px" width="6.4" height="3.4" viewBox="0 0 6.4 3.4"><path d="M0 0 H6.4 L3.2 3.4 Z" fill="#15121f"/></svg>
<span class="t" style="top:395.01px;font-size:10.5px;left:146.15px;transform:scaleX(0.9995);color:#1e3656;">Tools</span>
<svg style="left:185px;top:332.4px" width="28.8" height="28.8" viewBox="0 0 32 32"><defs><radialGradient id="g13" cx="35%" cy="25%" r="85%"><stop offset="0" stop-color="#4a78e6"/><stop offset="0.5" stop-color="#2348b8"/><stop offset="1" stop-color="#11287a"/></radialGradient></defs><circle cx="16" cy="16" r="15.3" fill="#dfe6f6" stroke="#7f93c8" stroke-width="0.9"/><circle cx="16" cy="16" r="14" fill="url(#g13)"/><text x="16" y="25.200" text-anchor="middle" font-family="Liberation Sans, sans-serif" font-weight="bold" font-size="25" fill="#fff">?</text></svg>
<span class="t" style="top:365.71px;font-size:10.5px;left:188.25px;transform:scaleX(0.9956);color:#1e3656;">Help</span>
<svg style="left:195.8px;top:380.8px" width="6.4" height="3.4" viewBox="0 0 6.4 3.4"><path d="M0 0 H6.4 L3.2 3.4 Z" fill="#15121f"/></svg>
<span class="t" style="top:395.01px;font-size:10.5px;left:188.25px;transform:scaleX(0.9956);color:#1e3656;">Help</span>
<div class="b" style="left:55px;top:443px;width:123px;height:1px;background:#b5a9cf;"></div>
<div class="b" style="left:55px;top:460px;width:123px;height:1px;background:#b5a9cf;"></div>
<div class="b" style="left:178px;top:426px;width:137px;height:18px;border:1px solid #b5a9cf;"></div>
<div class="b" style="left:178px;top:443px;width:198px;height:18px;border:1px solid #b5a9cf;"></div>
<span class="t" style="top:429.99px;font-size:11px;left:58.00px;transform:scaleX(0.8818);">Document No.</span>
<span class="t" style="top:428.69px;font-size:11px;left:181.50px;transform:scaleX(0.8830);">PYMT0000077625</span>
<span class="t" style="top:446.99px;font-size:11px;left:58.00px;transform:scaleX(0.9015);">Type</span>
<span class="t" style="top:445.69px;font-size:11px;left:181.50px;transform:scaleX(0.8485);">Payments</span>
<div class="b" style="left:421px;top:443px;width:77px;height:1px;background:#b5a9cf;"></div>
<div class="b" style="left:498px;top:426px;width:123px;height:18px;border:1px solid #b5a9cf;"></div>
<span class="t" style="top:429.69px;font-size:11px;left:424.50px;transform:scaleX(0.8705);">Amount</span>
<span class="t" style="top:429.69px;font-size:11px;right:105.50px;transform-origin:100% 0;transform:scaleX(0.8991);">$24,878.35</span>
<div class="b" style="left:55px;top:477px;width:565px;height:17px;background:#a3a3a3;"></div>
<div class="b" style="left:55px;top:494px;width:565px;height:17px;background:#ffffff;"></div>
<div class="b" style="left:55px;top:511px;width:565px;height:17px;background:#e9e9e9;"></div>
<div class="b" style="left:55px;top:528px;width:565px;height:12px;background:#ffffff;"></div>
<div class="b" style="left:620px;top:494px;width:14px;height:46px;background:#f0f0f0;"></div>
<div class="b" style="left:192px;top:494px;width:1px;height:46px;background:#b9b9b9;"></div>
<div class="b" style="left:236px;top:494px;width:1px;height:46px;background:#b9b9b9;"></div>
<div class="b" style="left:299px;top:494px;width:1px;height:46px;background:#b9b9b9;"></div>
<div class="b" style="left:375px;top:494px;width:1px;height:46px;background:#b9b9b9;"></div>
<div class="b" style="left:452px;top:494px;width:1px;height:46px;background:#b9b9b9;"></div>
<div class="b" style="left:528px;top:494px;width:1px;height:46px;background:#b9b9b9;"></div>
<div class="b" style="left:620px;top:494px;width:1px;height:46px;background:#b9b9b9;"></div>
<div class="b" style="left:55px;top:510.5px;width:565px;height:1px;background:#c9c9c9;"></div>
<div class="b" style="left:55px;top:527.5px;width:565px;height:1px;background:#c9c9c9;"></div>
<span class="t" style="top:480.69px;font-size:11px;left:58.50px;transform:scaleX(0.8818);color:#1a1fd0;text-decoration:underline;">Document No.</span>
<span class="t" style="top:480.69px;font-size:11px;left:194.00px;transform:scaleX(0.9015);">Type</span>
<span class="t" style="top:480.69px;font-size:11px;left:240.50px;transform:scaleX(0.8739);">Trx Date</span>
<span class="t" style="top:480.69px;font-size:11px;left:301.00px;transform:scaleX(0.8828);">Apply Date</span>
<span class="t" style="top:480.69px;font-size:11px;left:378.00px;transform:scaleX(0.8800);">Discounts</span>
<span class="t" style="top:480.69px;font-size:11px;left:454.50px;transform:scaleX(0.8971);">Write Offs</span>
<span class="t" style="top:480.69px;font-size:11px;left:531.00px;transform:scaleX(0.8766);">Apply Amount</span>
<span class="t" style="top:497.69px;font-size:11px;left:57.50px;transform:scaleX(0.8911);">INV1630465</span>
<span class="t" style="top:497.69px;font-size:11px;left:194.00px;transform:scaleX(0.8417);">SLS</span>
<span class="t" style="top:497.69px;font-size:11px;left:241.00px;transform:scaleX(0.9543);">9/30/2014</span>
<span class="t" style="top:497.69px;font-size:11px;right:349.50px;transform-origin:100% 0;transform:scaleX(0.9354);">10/27/2014</span>
<span class="t" style="top:497.69px;font-size:11px;right:272.00px;transform-origin:100% 0;transform:scaleX(0.8900);">$0.00</span>
<span class="t" style="top:497.69px;font-size:11px;right:196.00px;transform-origin:100% 0;transform:scaleX(0.8900);">$0.00</span>
<span class="t" style="top:497.69px;font-size:11px;right:105.00px;transform-origin:100% 0;transform:scaleX(0.8917);">$99.00</span>
<span class="t" style="top:514.69px;font-size:11px;left:57.50px;transform:scaleX(0.8911);">INV1630498</span>
<span class="t" style="top:514.69px;font-size:11px;left:194.00px;transform:scaleX(0.8417);">SLS</span>
<span class="t" style="top:514.69px;font-size:11px;left:241.00px;transform:scaleX(0.9543);">9/30/2014</span>
<span class="t" style="top:514.69px;font-size:11px;right:349.50px;transform-origin:100% 0;transform:scaleX(0.9354);">10/27/2014</span>
<span class="t" style="top:514.69px;font-size:11px;right:272.00px;transform-origin:100% 0;transform:scaleX(0.8900);">$0.00</span>
<span class="t" style="top:514.69px;font-size:11px;right:196.00px;transform-origin:100% 0;transform:scaleX(0.8900);">$0.00</span>
<span class="t" style="top:514.69px;font-size:11px;right:105.00px;transform-origin:100% 0;transform:scaleX(0.8917);">$53.00</span>
<span class="t" style="top:531.69px;font-size:11px;left:57.50px;transform:scaleX(0.8911);">INV1630522</span>
<span class="t" style="top:531.69px;font-size:11px;left:194.00px;transform:scaleX(0.8417);">SLS</span>
<span class="t" style="top:531.69px;font-size:11px;left:241.00px;transform:scaleX(0.9543);">9/30/2014</span>
<span class="t" style="top:531.69px;font-size:11px;right:349.50px;transform-origin:100% 0;transform:scaleX(0.9354);">10/27/2014</span>
<span class="t" style="top:531.69px;font-size:11px;right:272.00px;transform-origin:100% 0;transform:scaleX(0.8900);">$0.00</span>
<span class="t" style="top:531.69px;font-size:11px;right:196.00px;transform-origin:100% 0;transform:scaleX(0.8900);">$0.00</span>
<span class="t" style="top:531.69px;font-size:11px;right:105.00px;transform-origin:100% 0;transform:scaleX(0.8917);">$59.70</span>
<svg style="left:623.5px;top:500px" width="7" height="5" viewBox="0 0 7 5"><path d="M0.5 4.5L3.500 1.2L6.500 4.5" stroke="#404040" stroke-width="1.3" fill="none"/></svg>
<div class="b" style="left:643px;top:411px;width:1px;height:129px;background:#bfb2da;"></div>
<div class="b" style="left:47px;top:411px;width:1px;height:129px;background:#e9e2f7;"></div>
<div class="b" style="left:0px;top:535px;width:702px;height:303px;background:#ffffff;border:1px solid #4a90d9;border-bottom:none;"></div>
<div class="b" style="left:1px;top:562px;width:700px;height:83px;background:linear-gradient(#ffffff 0%,#f4f9fe 45%,#dfedfc 100%);"></div>
<div class="b" style="left:1px;top:645px;width:700px;height:1px;background:#9b9ba8;"></div>
<div class="b" style="left:1px;top:646px;width:700px;height:192px;background:#d7c6f2;"></div>
<svg style="left:8.2px;top:541.2px" width="14.3" height="14.3" viewBox="0 0 14.3 14.3"><rect width="14.3" height="14.3" fill="#10204f"/><path d="M1 11.7 C4.200 9.800 6 6 6.900 1.200 L7.500 10.600 C5.500 11.400 3 11.700 1 11.700 Z" fill="#fff"/><path d="M8.200 10.600 L9.500 4.400 L10.300 10.600 Z" fill="#eef2fb"/><path d="M10.700 11.700 L11.800 5.600 L13 11.700 Z" fill="#e3e9f7"/></svg>
<span class="t" style="top:543.14px;font-size:12px;left:26.80px;transform:scaleX(0.8770);color:#101010;-webkit-text-stroke:0;">Sales Transaction Inquiry Zoom - Heska Custom Programs  -  TSTHE (gorrelm)</span>
<svg style="left:592px;top:543px" width="95" height="12" viewBox="0 0 95 12"><path d="M1.500 6.500H11" stroke="#222" stroke-width="1.1"/><rect x="42.500" y="1.500" width="8.800" height="8.800" fill="none" stroke="#222" stroke-width="1.1"/><path d="M83 1.300L92.200 10.500M92.200 1.300L83 10.500" stroke="#222" stroke-width="1.1"/></svg>
<div class="b" style="left:47px;top:564px;width:1px;height:80px;background:linear-gradient(rgba(197,208,224,.2),#c3cfdf 30%,#c3cfdf 80%,rgba(197,208,224,.4));"></div>
<div class="b" style="left:48px;top:564px;width:1px;height:80px;background:linear-gradient(rgba(255,255,255,0),#ffffff 30%,#ffffff 80%,rgba(255,255,255,0));"></div>
<div class="b" style="left:85.5px;top:564px;width:1px;height:80px;background:linear-gradient(rgba(197,208,224,.2),#c3cfdf 30%,#c3cfdf 80%,rgba(197,208,224,.4));"></div>
<div class="b" style="left:86.5px;top:564px;width:1px;height:80px;background:linear-gradient(rgba(255,255,255,0),#ffffff 30%,#ffffff 80%,rgba(255,255,255,0));"></div>
<div class="b" style="left:152px;top:564px;width:1px;height:80px;background:linear-gradient(rgba(197,208,224,.2),#c3cfdf 30%,#c3cfdf 80%,rgba(197,208,224,.4));"></div>
<div class="b" style="left:153px;top:564px;width:1px;height:80px;background:linear-gradient(rgba(255,255,255,0),#ffffff 30%,#ffffff 80%,rgba(255,255,255,0));"></div>
<div class="b" style="left:198px;top:564px;width:1px;height:80px;background:linear-gradient(rgba(197,208,224,.2),#c3cfdf 30%,#c3cfdf 80%,rgba(197,208,224,.4));"></div>
<div class="b" style="left:199px;top:564px;width:1px;height:80px;background:linear-gradient(rgba(255,255,255,0),#ffffff 30%,#ffffff 80%,rgba(255,255,255,0));"></div>
<div class="b" style="left:314.5px;top:564px;width:1px;height:80px;background:linear-gradient(rgba(197,208,224,.2),#c3cfdf 30%,#c3cfdf 80%,rgba(197,208,224,.4));"></div>
<div class="b" style="left:315.5px;top:564px;width:1px;height:80px;background:linear-gradient(rgba(255,255,255,0),#ffffff 30%,#ffffff 80%,rgba(255,255,255,0));"></div>
<div class="b" style="left:357.5px;top:564px;width:1px;height:80px;background:linear-gradient(rgba(197,208,224,.2),#c3cfdf 30%,#c3cfdf 80%,rgba(197,208,224,.4));"></div>
<div class="b" style="left:358.5px;top:564px;width:1px;height:80px;background:linear-gradient(rgba(255,255,255,0),#ffffff 30%,#ffffff 80%,rgba(255,255,255,0));"></div>
<div class="b" style="left:433px;top:564px;width:1px;height:80px;background:linear-gradient(rgba(197,208,224,.2),#c3cfdf 30%,#c3cfdf 80%,rgba(197,208,224,.4));"></div>
<div class="b" style="left:434px;top:564px;width:1px;height:80px;background:linear-gradient(rgba(255,255,255,0),#ffffff 30%,#ffffff 80%,rgba(255,255,255,0));"></div>
<svg style="left:10.2px;top:567.9px" width="28.8" height="28.8" viewBox="0 0 32 32"><defs><radialGradient id="g14" cx="35%" cy="28%" r="80%"><stop offset="0" stop-color="#55cf3c"/><stop offset="0.5" stop-color="#2fa522"/><stop offset="1" stop-color="#14660f"/></radialGradient></defs><circle cx="16" cy="16" r="15.3" fill="#f1f4f1" stroke="#8d948d" stroke-width="1"/><circle cx="16" cy="16" r="13.5" fill="url(#g14)" stroke="#2c8a25" stroke-width="0.6"/><path d="M9.200 18.400 L14.400 24.600 L22.500 7.800" fill="none" stroke="#fff" stroke-width="3.800" stroke-linejoin="miter"/><path d="M14.600 21.500 L21.400 7.400" stroke="#d9f2d4" stroke-width="1" opacity="0.7"/></svg>
<span class="t" style="top:601.81px;font-size:10.5px;left:17.60px;transform:scaleX(0.9228);color:#1e3656;">OK</span>
<span class="t" style="top:631.11px;font-size:10.5px;left:6.00px;transform:scaleX(1.0339);color:#1e3656;">Actions</span>
<svg style="left:53.5px;top:568.2px" width="25.5" height="28.5" viewBox="0 0 25.5 28.5"><path d="M0.5 0.5 H15 L22 7 V27.500 H0.5 Z" fill="#fafbfc" stroke="#c3c8d0" stroke-width="0.8"/><path d="M15 0.5 V7 H22" fill="#e6e9ee" stroke="#c3c8d0" stroke-width="0.8"/><g stroke="#c5cad2" stroke-width="0.6"><path d="M3 6H13M3 9H18M3 12H18M3 15H18M3 18H18M3 21H18M3 24H18"/><path d="M6 5V25M10 5V25M14 8V25"/></g><path d="M17 17.400 L10.200 26.400" stroke="#4f5258" stroke-width="2.400" stroke-linecap="round"/><circle cx="20.700" cy="12.100" r="6" fill="#d8e8fb" fill-opacity="0.92" stroke="#6b727c" stroke-width="1.500"/><path d="M17.200 10.400 A4 4 0 0 1 21.400 8" stroke="#fff" stroke-width="1.200" fill="none"/><path d="M21 8.500 V15.500" stroke="#9fc3ee" stroke-width="0.7"/></svg>
<span class="t" style="top:601.81px;font-size:10.5px;left:54.65px;transform:scaleX(0.9881);color:#1e3656;">View</span>
<svg style="left:62.6px;top:616.9px" width="6.4" height="3.4" viewBox="0 0 6.4 3.4"><path d="M0 0 H6.4 L3.2 3.4 Z" fill="#15121f"/></svg>
<span class="t" style="top:631.11px;font-size:10.5px;left:54.65px;transform:scaleX(0.9881);color:#1e3656;">View</span>
<svg style="left:104.6px;top:568px" width="29.5" height="26.5" viewBox="0 0 29.5 26.5"><defs><radialGradient id="g15" cx="40%" cy="35%" r="75%"><stop offset="0" stop-color="#7ae868"/><stop offset="0.6" stop-color="#3cc437"/><stop offset="1" stop-color="#229a22"/></radialGradient></defs><rect x="0.7" y="6" width="26" height="20" fill="#f1f0f6" stroke="#6f7178" stroke-width="1.300"/><rect x="1.300" y="6.600" width="24.800" height="2.200" fill="#cfc6e4"/><path d="M10.200 6.500V26" stroke="#5d5f66" stroke-width="1.200"/><g stroke="#55575e" stroke-width="0.9"><path d="M3 11.500H8M3 14H6.500M3 16.500H8M3 19H7M3 21.500H8"/></g><rect x="11.200" y="9.500" width="14.800" height="15.800" fill="#ebe9f2"/><path d="M19.600 0.5 H24.400 V5.200 H29 V10 H24.400 V14.600 H19.600 V10 H15 V5.200 H19.600 Z" fill="url(#g15)" stroke="#249a26" stroke-width="0.8" stroke-linejoin="round"/></svg>
<span class="t" style="top:601.81px;font-size:10.5px;left:94.70px;transform:scaleX(1.0625);color:#1e3656;">Additional</span>
<svg style="left:116px;top:616.9px" width="6.4" height="3.4" viewBox="0 0 6.4 3.4"><path d="M0 0 H6.4 L3.2 3.4 Z" fill="#15121f"/></svg>
<span class="t" style="top:631.11px;font-size:10.5px;left:94.70px;transform:scaleX(1.0625);color:#1e3656;">Additional</span>
<svg style="left:161.8px;top:568.2px" width="26" height="25" viewBox="0 0 26 25"><defs><linearGradient id="g16" x1="0" y1="0" x2="0" y2="1"><stop offset="0" stop-color="#ffffff"/><stop offset="1" stop-color="#dfe6f2"/></linearGradient><linearGradient id="g17" x1="1" y1="0" x2="0" y2="1"><stop offset="0" stop-color="#5157d6"/><stop offset="0.6" stop-color="#2a2c9c"/><stop offset="1" stop-color="#1a1b6a"/></linearGradient></defs><rect x="0.5" y="0.5" width="25" height="24" fill="#d3d7de" stroke="#8f949c" stroke-width="0.9"/><path d="M1 24.500H25.500V1" stroke="#6f747c" stroke-width="1" fill="none"/><rect x="2.600" y="2.600" width="20.800" height="19.800" fill="url(#g16)"/><path d="M11.500 5 H21 V14.500 L18 11.600 C15 13 13.400 15.500 13 19.500 L7.200 19.500 C7.200 13.500 10 10 14.400 8 Z" fill="url(#g17)" stroke="#1e2080" stroke-width="0.5" stroke-linejoin="round"/></svg>
<span class="t" style="top:631.11px;font-size:10.5px;left:161.95px;transform:scaleX(0.9524);color:#1e3656;">Go To</span>
<svg style="left:208.9px;top:573.2px" width="23.5" height="19" viewBox="0 0 24 20"><path d="M0 4 H14 L16 0.5 H23 L24 2 V20 H0 Z" fill="#cfa774"/><path d="M0 5.5 H24 V20 H0 Z" fill="#d9b27f"/><path d="M0 19 H24 V20 H0 Z" fill="#c39a66"/></svg>
<span class="t" style="top:601.81px;font-size:10.5px;left:212.35px;transform:scaleX(0.9043);color:#1e3656;">File</span>
<svg style="left:216.8px;top:616.9px" width="6.4" height="3.4" viewBox="0 0 6.4 3.4"><path d="M0 0 H6.4 L3.2 3.4 Z" fill="#15121f"/></svg>
<svg style="left:241.7px;top:569.8px" width="28" height="24" viewBox="0 0 28 24"><path d="M12 9 L15.500 0.8 L26 3.200 L22.500 11 Z" fill="#fbfbfb" stroke="#a4a7ad" stroke-width="0.7"/><path d="M1.500 12.500 L9 8 L26.800 10.400 L27.200 14.600 L19.500 20.600 L1.500 18.200 Z" fill="#c9ccd2" stroke="#7e828a" stroke-width="0.6" stroke-linejoin="round"/><path d="M1.500 12.500 L9 8 L26.800 10.400 L19.600 15 Z" fill="#33363b"/><path d="M6 11.800 L10 9.400 L23 11.200 L19.400 13.600 Z" fill="#5b5f66"/><path d="M1.500 13 L19.500 15.400 L27 10.800" stroke="#1d1e21" stroke-width="1" fill="none"/><path d="M3 15.200 L11 16.300 L11 18.600 L3 17.500 Z" fill="#2f8fe6"/><path d="M4.500 18.500 L12 19.500 L14.500 23.200 L6.500 22 Z" fill="#eef3fa" stroke="#9aa1ad" stroke-width="0.6"/></svg>
<span class="t" style="top:601.81px;font-size:10.5px;left:243.50px;transform:scaleX(1.0653);color:#1e3656;">Print</span>
<svg style="left:277px;top:569px" width="27" height="25" viewBox="0 0 27 25"><g opacity="0.75"><path d="M9 8 L18 1 L26.5 8 V17 H9 Z" fill="#d9dce1" stroke="#b3b8c0" stroke-width="0.8"/><path d="M9 8 L17.8 13.4 L26.5 8" fill="none" stroke="#b3b8c0" stroke-width="0.8"/><path d="M0.5 6.5 H12 L15 9.5 V24.5 H0.5 Z" fill="#e4e6ea" stroke="#b3b8c0" stroke-width="0.8"/><g stroke="#bfc4cc" stroke-width="0.8"><path d="M3 11H12M3 13.5H12M3 16H12M3 18.5H12M3 21H12"/></g></g></svg>
<span class="t" style="top:601.81px;font-size:10.5px;left:276.40px;transform:scaleX(1.0083);color:#b7bec8;">E-mail</span>
<span class="t" style="top:631.11px;font-size:10.5px;left:248.65px;transform:scaleX(0.9043);color:#1e3656;">File</span>
<svg style="left:327.8px;top:568px" width="16.2" height="27.5" viewBox="0 0 16.2 27.5"><defs><linearGradient id="g18" x1="0" y1="0" x2="1" y2="0"><stop offset="0" stop-color="#9a9a9a"/><stop offset="0.35" stop-color="#ececec"/><stop offset="1" stop-color="#7e7e7e"/></linearGradient><linearGradient id="g19" x1="0" y1="0" x2="1" y2="0"><stop offset="0" stop-color="#d39f0e"/><stop offset="0.45" stop-color="#ffd92e"/><stop offset="1" stop-color="#c48e0a"/></linearGradient><linearGradient id="g20" x1="0" y1="0" x2="1" y2="0"><stop offset="0" stop-color="#b9b9b9"/><stop offset="1" stop-color="#6f6f6f"/></linearGradient></defs><path d="M0.4 5.800 L2.700 3.300 L4.700 5.300 L7.300 2.500 L5 0.4 C8.500 -0.4 10.900 2.600 9.900 6 C9.400 7.800 8 8.800 7.100 9.500 L7.100 25.500 C7.100 27.600 3.300 27.600 3.300 25.500 L3.300 9.800 C1.500 9.200 0.4 7.600 0.4 5.800 Z" fill="url(#g18)" stroke="#6d6d6d" stroke-width="0.7" stroke-linejoin="round"/><rect x="12.100" y="0.2" width="2.700" height="13" fill="url(#g20)"/><path d="M10.700 12.800 H15.800 C16.400 17 16.400 22 15.900 25.600 C15.700 27.800 10.800 27.800 10.600 25.600 C10.100 22 10.100 17 10.700 12.800 Z" fill="url(#g19)" stroke="#b5860b" stroke-width="0.5"/></svg>
<span class="t" style="top:601.81px;font-size:10.5px;left:324.05px;transform:scaleX(0.9995);color:#1e3656;">Tools</span>
<svg style="left:333.1px;top:616.9px" width="6.4" height="3.4" viewBox="0 0 6.4 3.4"><path d="M0 0 H6.4 L3.2 3.4 Z" fill="#15121f"/></svg>
<span class="t" style="top:631.11px;font-size:10.5px;left:324.05px;transform:scaleX(0.9995);color:#1e3656;">Tools</span>
<svg style="left:362.9px;top:567.9px" width="28.8" height="28.8" viewBox="0 0 32 32"><defs><radialGradient id="g21" cx="35%" cy="25%" r="85%"><stop offset="0" stop-color="#4a78e6"/><stop offset="0.5" stop-color="#2348b8"/><stop offset="1" stop-color="#11287a"/></radialGradient></defs><circle cx="16" cy="16" r="15.3" fill="#dfe6f6" stroke="#7f93c8" stroke-width="0.9"/><circle cx="16" cy="16" r="14" fill="url(#g21)"/><text x="16" y="25.200" text-anchor="middle" font-family="Liberation Sans, sans-serif" font-weight="bold" font-size="25" fill="#fff">?</text></svg>
<span class="t" style="top:601.81px;font-size:10.5px;left:366.05px;transform:scaleX(0.9956);color:#1e3656;">Help</span>
<svg style="left:373.6px;top:616.9px" width="6.4" height="3.4" viewBox="0 0 6.4 3.4"><path d="M0 0 H6.4 L3.2 3.4 Z" fill="#15121f"/></svg>
<svg style="left:400.3px;top:568.9px" width="23.5" height="26.5" viewBox="0 0 23.5 26.5"><rect x="1.200" y="1.500" width="22.300" height="25" fill="#8f8983"/><rect x="21.500" y="0.3" width="2" height="24" fill="#7d6a5e"/><rect x="0.4" y="0.4" width="21.400" height="23.300" fill="#fdfcfa" stroke="#d3ccc3" stroke-width="0.5"/><rect x="0.4" y="0.2" width="23" height="2.300" fill="#916a55"/><rect x="2.800" y="4.700" width="7.800" height="7.800" rx="1.600" fill="#b9653c"/><path d="M6.700 6L6.700 11.200M4.100 8.600L9.300 8.600" stroke="#fbeee6" stroke-width="2.200"/><circle cx="6.700" cy="8.600" r="1.300" fill="#f6d9c8"/><rect x="11.600" y="5.500" width="7.200" height="6.200" fill="#8b6a3c"/><path d="M11.600 7.600H18.800M11.600 9.600H18.800M15.200 5.500V11.700" stroke="#c9a66a" stroke-width="0.7"/><g stroke="#a9bcd6" stroke-width="0.9"><path d="M4.400 14.300H18.300M4.400 16.600H18.300M4.400 18.900H18.300"/></g><path d="M4.400 21H18.300" stroke="#c9c5bf" stroke-width="0.8"/></svg>
<span class="t" style="top:601.81px;font-size:10.5px;left:398.50px;transform:scaleX(0.9733);color:#1e3656;">Open</span>
<span class="t" style="top:614.91px;font-size:10.5px;left:400.55px;transform:scaleX(1.0145);color:#1e3656;">Note</span>
<span class="t" style="top:631.11px;font-size:10.5px;left:384.10px;transform:scaleX(0.9910);color:#1e3656;">Help</span>
<div class="b" style="left:8px;top:671px;width:123px;height:1px;background:#b5a9cf;"></div>
<span class="t" style="top:658.69px;font-size:11px;left:11.00px;transform:scaleX(0.9283);">Type/Type ID:</span>
<div class="b" style="left:8px;top:688px;width:123px;height:1px;background:#b5a9cf;"></div>
<span class="t" style="top:675.89px;font-size:11px;left:11.00px;transform:scaleX(0.8818);">Document No.</span>
<div class="b" style="left:8px;top:706px;width:123px;height:1px;background:#b5a9cf;"></div>
<span class="t" style="top:693.09px;font-size:11px;left:11.00px;transform:scaleX(0.8342);">Customer ID</span>
<div class="b" style="left:8px;top:723px;width:123px;height:1px;background:#b5a9cf;"></div>
<span class="t" style="top:710.29px;font-size:11px;left:11.00px;transform:scaleX(0.8617);">Customer Name</span>
<div class="b" style="left:8px;top:740px;width:123px;height:1px;background:#b5a9cf;"></div>
<span class="t" style="top:727.49px;font-size:11px;left:11.00px;transform:scaleX(0.8891);">Ship To Address</span>
<div class="b" style="left:131px;top:654px;width:120px;height:18px;border:1px solid #b5a9cf;"></div>
<div class="b" style="left:250px;top:654px;width:106px;height:18px;border:1px solid #b5a9cf;"></div>
<div class="b" style="left:131px;top:671px;width:151px;height:18px;border:1px solid #b5a9cf;"></div>
<div class="b" style="left:131px;top:688px;width:151px;height:18px;border:1px solid #b5a9cf;"></div>
<div class="b" style="left:131px;top:705px;width:168px;height:19px;border:1px solid #b5a9cf;"></div>
<div class="b" style="left:131px;top:723px;width:86px;height:18px;border:1px solid #b5a9cf;"></div>
<div class="b" style="left:216px;top:723px;width:185px;height:18px;border:1px solid #b5a9cf;"></div>
<span class="t" style="top:657.19px;font-size:11px;left:134.50px;transform:scaleX(0.9038);">Invoice</span>
<span class="t" style="top:657.19px;font-size:11px;left:254.00px;transform:scaleX(0.8796);">STANDARD</span>
<span class="t" style="top:674.39px;font-size:11px;left:134.50px;transform:scaleX(0.8911);">INV1630465</span>
<span class="t" style="top:691.59px;font-size:11px;left:134.50px;transform:scaleX(0.9126);">434696</span>
<span class="t" style="top:708.89px;font-size:11px;left:134.50px;transform:scaleX(0.8928);">VCA #469 WEST SHORE ANIMAL H</span>
<span class="t" style="top:725.99px;font-size:11px;left:135.50px;transform:scaleX(0.8374);">SHIP</span>
<span class="t" style="top:725.99px;font-size:11px;left:220.50px;transform:scaleX(0.8842);">719 LIMEKILN RD</span>
<svg style="left:252.5px;top:672.8px" width="11.8" height="12.8" viewBox="0 0 10.5 11.5"><path d="M0.4 0.4 H6.600 L9.600 3.400 V10.600 H0.4 Z" fill="#fffcd6"/><path d="M0.4 10.600 V0.4 H6.600" fill="none" stroke="#f3efe0" stroke-width="0.7"/><path d="M6.600 0.4 L9.700 3.500 V10.700 H0.4" fill="none" stroke="#1d1d1d" stroke-width="1.300"/><path d="M6.600 0.6 V3.500 H9.600" fill="#e6e2b8" stroke="#3a3a3a" stroke-width="0.6"/></svg>
<svg style="left:266.7px;top:674px" width="12.5" height="10.5" viewBox="0 0 12.5 10.5"><path d="M1.500 3.900 H6.400 V1.200 L11.300 5.250 L6.400 9.300 V6.600 H1.500 Z" fill="#fff" stroke="#ffffff" stroke-width="3.400" opacity="0.85" stroke-linejoin="round"/><path d="M1.500 3.900 H6.400 V1.200 L11.300 5.250 L6.400 9.300 V6.600 H1.500 Z" fill="#1668b6" stroke="#0b4076" stroke-width="0.9" stroke-linejoin="round"/><path d="M2.200 4.600 H7 V2.900" stroke="#5fb0f2" stroke-width="0.7" fill="none"/></svg>
<svg style="left:266.7px;top:691.8px" width="12.5" height="10.5" viewBox="0 0 12.5 10.5"><path d="M1.500 3.900 H6.400 V1.200 L11.300 5.250 L6.400 9.300 V6.600 H1.500 Z" fill="#fff" stroke="#ffffff" stroke-width="3.400" opacity="0.85" stroke-linejoin="round"/><path d="M1.500 3.900 H6.400 V1.200 L11.300 5.250 L6.400 9.300 V6.600 H1.500 Z" fill="#1668b6" stroke="#0b4076" stroke-width="0.9" stroke-linejoin="round"/><path d="M2.200 4.600 H7 V2.900" stroke="#5fb0f2" stroke-width="0.7" fill="none"/></svg>
<div class="b" style="left:281px;top:688px;width:18px;height:18px;border:1px solid #b5a9cf;"></div>
<svg style="left:283px;top:689px" width="14" height="15" viewBox="0 0 14 15"><g opacity="0.75" fill="none" stroke="#f6f2fc" stroke-linecap="round"><path d="M1.500 11.500 C5 12.500 10 9.500 12.500 4.500" stroke-width="2"/><path d="M1 8 C4 8.500 7.500 6.500 9 3" stroke-width="1.300"/><path d="M3 4.500 L6.500 1.500" stroke-width="1.200"/><path d="M5 13.800 C8 14 11 12.500 13 10" stroke-width="1.200"/></g></svg>
<div class="b" style="left:431px;top:671px;width:122px;height:1px;background:#b5a9cf;"></div>
<div class="b" style="left:553px;top:654px;width:122px;height:18px;border:1px solid #b5a9cf;"></div>
<span class="t" style="top:658.49px;font-size:11px;left:433.50px;transform:scaleX(0.8823);">Date</span>
<span class="t" style="top:657.29px;font-size:11px;left:556.50px;transform:scaleX(0.9543);">9/30/2014</span>
<div class="b" style="left:431px;top:688px;width:122px;height:1px;background:#b5a9cf;"></div>
<div class="b" style="left:553px;top:671px;width:122px;height:18px;border:1px solid #b5a9cf;"></div>
<span class="t" style="top:675.64px;font-size:11px;left:433.50px;transform:scaleX(0.8676);">Batch ID</span>
<span class="t" style="top:674.44px;font-size:11px;left:556.50px;transform:scaleX(0.8648);">FFTSO09302014</span>
<div class="b" style="left:431px;top:705px;width:122px;height:1px;background:#b5a9cf;"></div>
<div class="b" style="left:553px;top:688px;width:122px;height:18px;border:1px solid #b5a9cf;"></div>
<span class="t" style="top:692.79px;font-size:11px;left:433.50px;transform:scaleX(0.8672);">Default Site ID</span>
<span class="t" style="top:691.59px;font-size:11px;left:556.50px;transform:scaleX(0.8582);">04</span>
<div class="b" style="left:431px;top:723px;width:122px;height:1px;background:#b5a9cf;"></div>
<div class="b" style="left:553px;top:705px;width:122px;height:19px;border:1px solid #b5a9cf;"></div>
<span class="t" style="top:709.94px;font-size:11px;left:433.50px;transform:scaleX(0.8501);">Customer PO Number</span>
<div class="b" style="left:431px;top:740px;width:122px;height:1px;background:#b5a9cf;"></div>
<div class="b" style="left:553px;top:723px;width:122px;height:18px;border:1px solid #b5a9cf;"></div>
<span class="t" style="top:727.09px;font-size:11px;left:433.50px;transform:scaleX(0.8545);">Entered By</span>
<span class="t" style="top:725.89px;font-size:11px;left:556.50px;transform:scaleX(0.8323);">christm</span>
<div class="b" style="left:431px;top:757px;width:122px;height:1px;background:#b5a9cf;"></div>
<div class="b" style="left:553px;top:740px;width:122px;height:18px;border:1px solid #b5a9cf;"></div>
<span class="t" style="top:744.24px;font-size:11px;left:433.50px;transform:scaleX(0.8453);">Currency ID</span>
<svg style="left:660px;top:657.4px" width="13" height="10.8" viewBox="0 0 12.5 10.5"><path d="M1.500 3.900 H6.400 V1.200 L11.300 5.250 L6.400 9.300 V6.600 H1.500 Z" fill="#fff" stroke="#ffffff" stroke-width="3.400" opacity="0.85" stroke-linejoin="round"/><path d="M1.500 3.900 H6.400 V1.200 L11.300 5.250 L6.400 9.300 V6.600 H1.500 Z" fill="#1668b6" stroke="#0b4076" stroke-width="0.9" stroke-linejoin="round"/><path d="M2.200 4.600 H7 V2.900" stroke="#5fb0f2" stroke-width="0.7" fill="none"/></svg>
<div class="b" style="left:674.5px;top:740px;width:15px;height:16px;border:1px solid #c6bae0;"></div>
<svg style="left:675.8px;top:742.8px" width="13" height="10.8" viewBox="0 0 12.5 10.5"><path d="M1.500 3.900 H6.400 V1.200 L11.300 5.250 L6.400 9.300 V6.600 H1.500 Z" fill="#fff" stroke="#ffffff" stroke-width="3.400" opacity="0.85" stroke-linejoin="round"/><path d="M1.500 3.900 H6.400 V1.200 L11.300 5.250 L6.400 9.300 V6.600 H1.500 Z" fill="#1668b6" stroke="#0b4076" stroke-width="0.9" stroke-linejoin="round"/><path d="M2.200 4.600 H7 V2.900" stroke="#5fb0f2" stroke-width="0.7" fill="none"/></svg>
<div class="b" style="left:8px;top:762px;width:683px;height:17px;background:#b9b9b9;"></div>
<div class="b" style="left:8px;top:779px;width:683px;height:18.5px;background:#9d9d9d;"></div>
<div class="b" style="left:8px;top:797.5px;width:667px;height:16.5px;background:#000000;"></div>
<div class="b" style="left:8px;top:814px;width:667px;height:17px;background:#e9e9e9;"></div>
<div class="b" style="left:8px;top:831px;width:667px;height:7px;background:#ffffff;"></div>
<div class="b" style="left:675px;top:797.5px;width:16px;height:41px;background:#cdcdcd;"></div>
<div class="b" style="left:675px;top:797.5px;width:16px;height:16.5px;background:#f0f0f0;"></div>
<div class="b" style="left:191px;top:797.5px;width:1px;height:40.5px;background:#b9b9b9;"></div>
<div class="b" style="left:279px;top:797.5px;width:1px;height:40.5px;background:#b9b9b9;"></div>
<div class="b" style="left:404px;top:797.5px;width:1px;height:40.5px;background:#b9b9b9;"></div>
<div class="b" style="left:541.5px;top:797.5px;width:1px;height:40.5px;background:#b9b9b9;"></div>
<div class="b" style="left:8px;top:830.5px;width:667px;height:1px;background:#c9c9c9;"></div>
<svg style="left:14px;top:770px" width="7" height="5" viewBox="0 0 7 5"><path d="M0 0H7L3.500 5Z" fill="#f2f2f2"/></svg>
<div class="b" style="left:25px;top:765px;width:1px;height:12px;background:#dedede;"></div>
<span class="t" style="top:765.69px;font-size:11px;left:31.00px;transform:scaleX(0.8540);">Line Items by Order Entered</span>
<div class="b" style="left:63.5px;top:776.5px;width:6px;height:1px;background:#15121f;"></div>
<span class="t" style="top:784.19px;font-size:11px;left:11.00px;transform:scaleX(0.8494);">Item Number</span>
<span class="t" style="top:784.19px;font-size:11px;left:180.00px;transform:scaleX(0.8600);">D</span>
<span class="t" style="top:784.19px;font-size:11px;left:195.00px;transform:scaleX(0.8798);">U of M</span>
<span class="t" style="top:783.19px;font-size:11px;left:283.50px;transform:scaleX(0.8748);">Invoice Quantity</span>
<span class="t" style="top:784.19px;font-size:11px;left:407.50px;transform:scaleX(0.8599);">Unit Price</span>
<span class="t" style="top:783.69px;font-size:11px;left:546.00px;transform:scaleX(0.8579);">Extended Price</span>
<span class="t" style="top:800.89px;font-size:11px;left:12.50px;transform:scaleX(0.9126);color:#fff;">905302</span>
<span class="t" style="top:800.89px;font-size:11px;left:196.00px;transform:scaleX(0.8501);color:#fff;">bot</span>
<span class="t" style="top:800.19px;font-size:11px;right:321.00px;transform-origin:100% 0;transform:scaleX(0.8875);color:#fff;">1.00</span>
<span class="t" style="top:800.19px;font-size:11px;right:183.50px;transform-origin:100% 0;transform:scaleX(0.8768);color:#fff;">$89.00</span>
<span class="t" style="top:800.19px;font-size:11px;right:49.50px;transform-origin:100% 0;transform:scaleX(0.8768);color:#fff;">$89.00</span>
<div class="b" style="left:177.5px;top:799.5px;width:12px;height:12px;border:1px solid #4a4a4a;"></div>
<svg style="left:676.3px;top:763.8px" width="14.4" height="14.4" viewBox="0 0 16 16"><circle cx="8" cy="8" r="7.4" fill="#dcdcdc" stroke="#6f6f6f" stroke-width="1"/><path d="M4.6 4.6 L8 7.6 L11.4 4.6 M4.6 8.4 L8 11.4 L11.4 8.4" stroke="#444" stroke-width="1.3" fill="none"/></svg>
<svg style="left:679.5px;top:803px" width="7" height="5" viewBox="0 0 7 5"><path d="M0.5 4.5L3.500 1.2L6.500 4.5" stroke="#404040" stroke-width="1.3" fill="none"/></svg>
<svg style="left:134.8px;top:783px" width="11.5" height="11.5" viewBox="0 0 10 10"><circle cx="5" cy="5" r="4.3" fill="#fff" stroke="#222" stroke-width="1"/><path d="M5 4.2V7.600" stroke="#222" stroke-width="1.3"/><circle cx="5" cy="2.700" r="0.8" fill="#222"/></svg>
<svg style="left:149.6px;top:784px" width="12.5" height="10.5" viewBox="0 0 12.5 10.5"><path d="M1.500 3.900 H6.400 V1.200 L11.300 5.250 L6.400 9.300 V6.600 H1.500 Z" fill="#fff" stroke="#ffffff" stroke-width="3.400" opacity="0.85" stroke-linejoin="round"/><path d="M1.500 3.900 H6.400 V1.200 L11.300 5.250 L6.400 9.300 V6.600 H1.500 Z" fill="#1668b6" stroke="#0b4076" stroke-width="0.9" stroke-linejoin="round"/><path d="M2.200 4.600 H7 V2.900" stroke="#5fb0f2" stroke-width="0.7" fill="none"/></svg>
<svg style="left:388.5px;top:784.5px" width="13.5" height="8" viewBox="0 0 13.5 8"><g opacity="0.95"><ellipse cx="3.500" cy="4.5" rx="3" ry="2.200" fill="none" stroke="#6f96d8" stroke-width="1.5"/><ellipse cx="9.500" cy="3.500" rx="3" ry="2.200" fill="none" stroke="#e6edf9" stroke-width="1.5"/></g></svg>
</div></body></html>
